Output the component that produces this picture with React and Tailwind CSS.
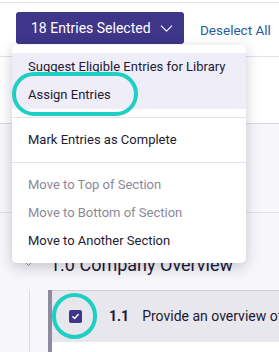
import React from "react";

function Chevron({ className }) {
  return (
    <svg className={className} viewBox="0 0 14 8" fill="none" stroke="currentColor" strokeWidth="1.3" strokeLinecap="round" strokeLinejoin="round">
      <path d="M1 1l6 6 6-6" />
    </svg>
  );
}

function Item({ children, disabled }) {
  return (
    <div className={`flex h-[28px] items-center pl-4 text-[13px] ${disabled ? "text-[#8b8899]" : "text-[#1e1b33]"}`}>
      {children}
    </div>
  );
}

export default function App() {
  return (
    <div className="relative h-[352px] w-[279px] overflow-hidden bg-[#f7f7fa]" style={{ fontFamily: "Roboto, 'Liberation Sans', sans-serif" }}>
      <div className="h-[2px] bg-white" />
      <header className="flex h-[55px] items-start border-y border-[#e3e1ee] bg-white pl-4 pt-[9px]">
        <button className="flex h-[32px] w-[168px] items-center rounded-[3px] bg-[#3f3589] pl-[15px] text-[14px] text-white">
          <span>18 Entries Selected</span>
          <Chevron className="ml-[9px] h-[7px] w-[13px]" />
        </button>
        <span className="ml-[16px] mt-[8px] text-[13.5px] text-[#1f5c99]">Deselect All</span>
      </header>
      <div className="h-[67px] border-b border-[#dcdbe3] bg-white" />
      <div className="h-[89px] border-b border-[#e3e1ee]" />
      <div className="mt-[37px] flex h-[28px] items-center">
        <Chevron className="ml-[25px] h-[4px] w-[7px] text-[#6b6880]" />
        <span className="ml-[18px] text-[18px] text-[#1b1834]">1.0 Company Overview</span>
      </div>
      <div className="ml-[29px] mt-[12px] border-l border-[#dddce4] pl-[18px]">
        <div className="border-l-4 border-[#8e8a9f] bg-white">
          <div className="flex h-[52px] items-center overflow-hidden border-t border-[#d0cedb] bg-[#e9e7ee] pl-[17px]">
            <div className="flex h-[13px] w-[13px] shrink-0 items-center justify-center rounded-[2px] bg-[#3f3589]">
              <svg viewBox="0 0 10 10" className="h-[9px] w-[9px]" fill="none" stroke="white" strokeWidth="1.6" strokeLinecap="round" strokeLinejoin="round">
                <path d="M2 5.2l2 2 4-4.4" />
              </svg>
            </div>
            <span className="ml-[27px] whitespace-nowrap text-[14px] font-bold text-[#1b1834]">1.1</span>
            <span className="ml-[13px] whitespace-nowrap text-[14px] text-[#1b1834]">Provide an overview of your company</span>
          </div>
          <div className="h-[40px]" />
        </div>
      </div>

      <div className="absolute left-[12px] top-[45px] w-[234px] rounded-[5px] bg-white shadow-[0_4px_14px_rgba(20,15,50,0.22)]">
        <div className="border-b border-[#e3e1ee] pb-2 pt-2">
          <div className="bg-[#efedf7]">
            <Item>Suggest Eligible Entries for Library</Item>
            <Item>Assign Entries</Item>
          </div>
        </div>
        <div className="border-b border-[#e3e1ee] py-2">
          <Item>Mark Entries as Complete</Item>
        </div>
        <div className="py-2">
          <Item disabled>Move to Top of Section</Item>
          <Item disabled>Move to Bottom of Section</Item>
          <Item>Move to Another Section</Item>
        </div>
      </div>

      <div className="absolute left-[12px] top-[72px] h-[44px] w-[126px] rounded-[22px] border-4 border-[#1ecfc4]" />
      <div className="absolute left-[52px] top-[293px] h-[46px] w-[45px] rounded-full border-4 border-[#1ecfc4]" />
    </div>
  );
}
